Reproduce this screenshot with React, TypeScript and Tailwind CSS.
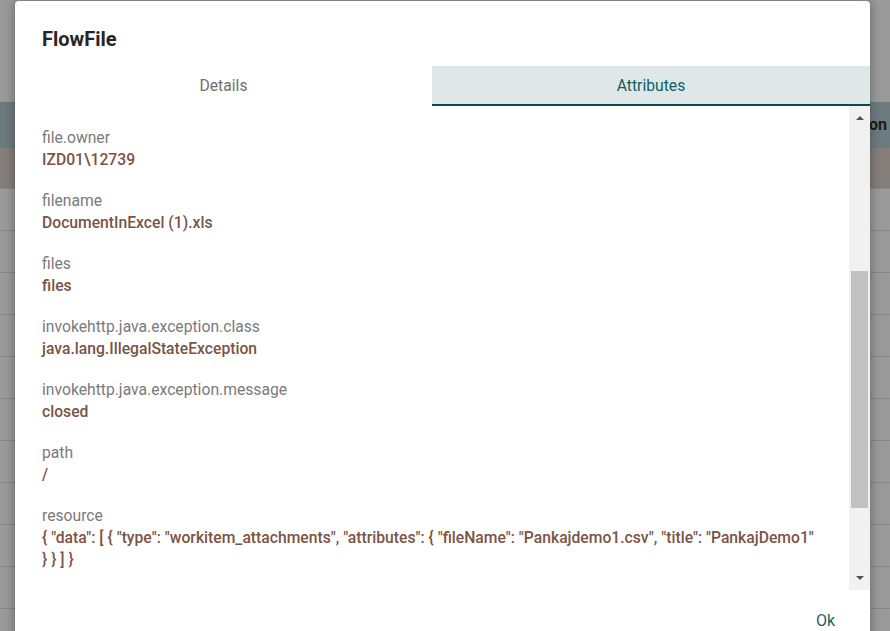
import { ReactNode } from "react";

const attrs: { name: string; value: ReactNode }[] = [
  { name: "file.owner", value: "IZD01\\12739" },
  { name: "filename", value: "DocumentInExcel (1).xls" },
  { name: "files", value: "files" },
  { name: "invokehttp.java.exception.class", value: "java.lang.IllegalStateException" },
  { name: "invokehttp.java.exception.message", value: "closed" },
  { name: "path", value: "/" },
  {
    name: "resource",
    value:
      '{ "data": [ { "type": "workitem_attachments", "attributes": { "fileName": "Pankajdemo1.csv", "title": "PankajDemo1" } } ] }',
  },
];

function BackgroundPage() {
  const rows = Array.from({ length: 11 });
  return (
    <div className="h-[631px] w-full overflow-hidden bg-[#9a9a9a]">
      <div className="h-[102px]" />
      <div className="flex h-[46px] items-center justify-end bg-[#6e7b7e] pr-[3px]">
        <span className="text-[16px] font-bold text-[#1b1b1b]">Action</span>
      </div>
      <div className="h-[40px] bg-[#857e7a]" />
      {rows.map((_, i) => (
        <div key={i} className="h-[42px] border-t border-[#878787] bg-[#9a9a9a]" />
      ))}
    </div>
  );
}

function Scrollbar() {
  return (
    <div className="flex w-[21px] shrink-0 flex-col items-center bg-[#f1f1f1]">
      <div className="flex h-[24px] items-center justify-center">
        <div className="h-0 w-0 border-x-[4px] border-b-[4px] border-x-transparent border-b-[#505050]" />
      </div>
      <div className="mt-[141px] h-[237px] w-[17px] bg-[#c1c1c1]" />
      <div className="flex-1" />
      <div className="flex h-[24px] items-center justify-center">
        <div className="h-0 w-0 border-x-[4px] border-t-[4px] border-x-transparent border-t-[#505050]" />
      </div>
    </div>
  );
}

export default function App() {
  return (
    <div className="relative h-[631px] w-[890px] overflow-hidden font-['Roboto',sans-serif]">
      <BackgroundPage />

      <div className="absolute left-[15px] top-[1px] flex h-[660px] w-[855px] flex-col rounded-t-[4px] bg-white shadow-[0_0_12px_rgba(0,0,0,0.35)]">
        <h2 className="px-[27px] pt-[26px] text-[20px] font-bold leading-[24px] text-[#262626]">FlowFile</h2>

        <div className="mt-[15px] flex h-[40px] text-[15.7px]">
          <div className="flex w-[417px] items-center justify-center text-[#6f6f6f]">Details</div>
          <div className="flex flex-1 items-center justify-center border-b-2 border-[#064d4d] bg-[#dfe8e8] pt-[2px] text-[#125e5e]">
            Attributes
          </div>
        </div>

        <div className="flex h-[484px]">
          <div className="flex-1 overflow-hidden pl-[27px] pr-[30px] pt-[21px]">
            {attrs.map((a) => (
              <div key={a.name} className="mb-[19px] text-[15.7px] leading-[22px]">
                <div className="text-[#7a7a7a]">{a.name}</div>
                <div className="font-medium text-[#7a5445]">{a.value}</div>
              </div>
            ))}
          </div>
          <Scrollbar />
        </div>

        <div className="flex justify-end px-[35px] pt-[19px]">
          <button className="text-[16px] text-[#1d6262]">Ok</button>
        </div>
      </div>
    </div>
  );
}
